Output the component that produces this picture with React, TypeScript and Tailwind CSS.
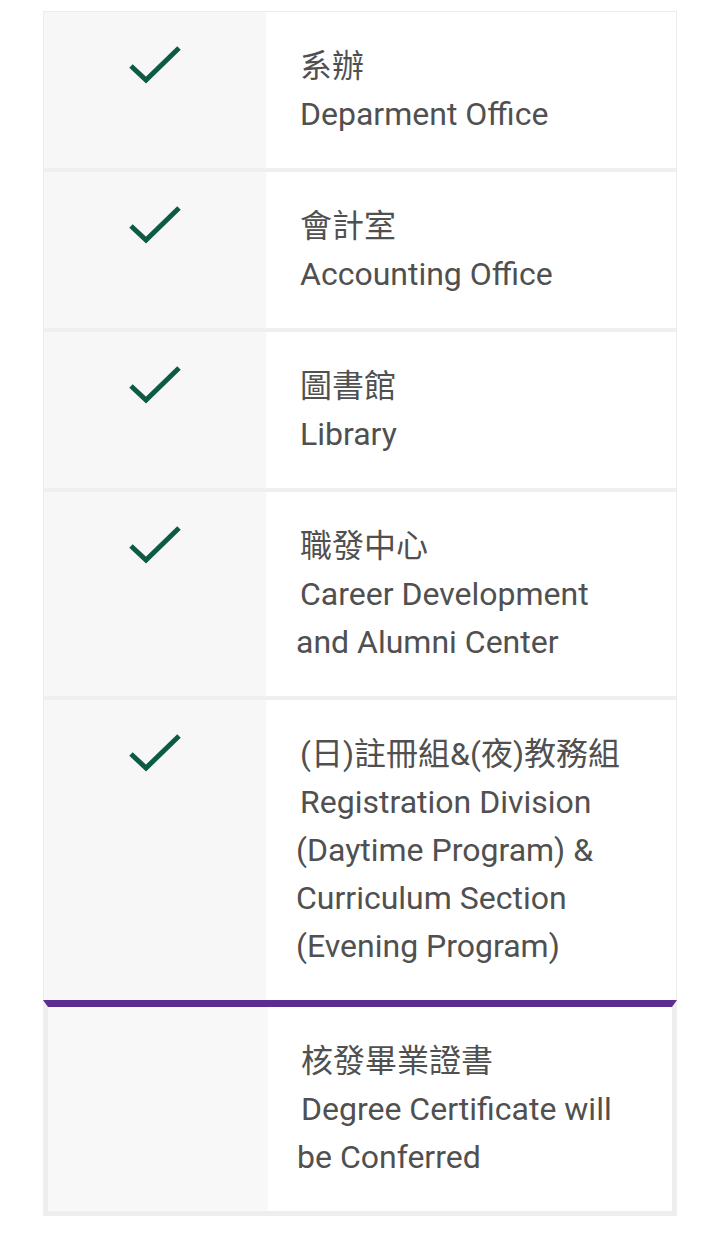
type Step = {
  zh: string
  en: string[]
  done: boolean
}

const steps: Step[] = [
  { zh: "系辦", en: ["Deparment Office"], done: true },
  { zh: "會計室", en: ["Accounting Office"], done: true },
  { zh: "圖書館", en: ["Library"], done: true },
  { zh: "職發中心", en: ["Career Development", "and Alumni Center"], done: true },
  {
    zh: "(日)註冊組&(夜)教務組",
    en: [
      "Registration Division",
      "(Daytime Program) &",
      "Curriculum Section",
      "(Evening Program)",
    ],
    done: true,
  },
]

function Check() {
  return (
    <svg width="56" height="44" viewBox="0 0 56 44" fill="none">
      <path
        d="M4 23 L19 37 L52 5"
        stroke="#0d5b45"
        strokeWidth="5"
        strokeLinecap="butt"
        strokeLinejoin="miter"
      />
    </svg>
  )
}

function Label({ zh, en }: { zh: string; en: string[] }) {
  return (
    <div className="text-[32px] leading-[48px] text-[#505050] whitespace-nowrap font-['Roboto','Noto_Sans_CJK_TC',sans-serif]">
      <div className="pl-[4px]">{zh}</div>
      {en.map((line, i) => (
        <div key={line} className={i === 0 ? "pl-[4px]" : ""}>
          {line}
        </div>
      ))}
    </div>
  )
}

export default function App() {
  return (
    <div className="min-h-[1245px] bg-white pl-[43px] pr-[41px] pt-[11px]">
      <div className="border-x border-t border-[#ececec]">
        {steps.map((s, i) => (
          <div
            key={s.zh}
            className={
              i < steps.length - 1
                ? "flex border-b-4 border-[#efefef]"
                : "flex"
            }
          >
            <div className="flex w-[222px] shrink-0 justify-center bg-[#f7f7f7] pt-[31px]">
              {s.done && <Check />}
            </div>
            <div className="flex-1 bg-white py-[30px] pl-[30px] pr-4">
              <Label zh={s.zh} en={s.en} />
            </div>
          </div>
        ))}
      </div>
      <div className="flex border-x-[5px] border-b-[5px] border-t-[7px] border-[#eeeeee] border-t-[#5c2d91]">
        <div className="w-[220px] shrink-0 bg-[#f8f8f9]" />
        <div className="flex-1 bg-white py-[30px] pl-[29px] pr-4">
          <Label
            zh="核發畢業證書"
            en={["Degree Certificate will", "be Conferred"]}
          />
        </div>
      </div>
    </div>
  )
}
